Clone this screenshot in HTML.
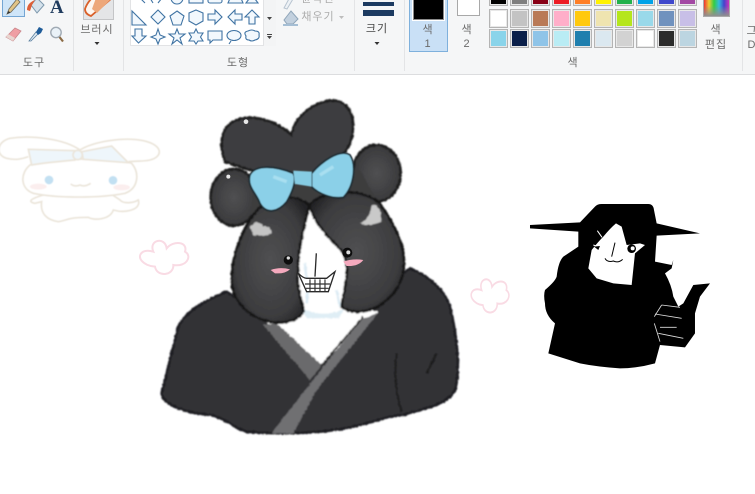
<!DOCTYPE html>
<html lang="ko"><head><meta charset="utf-8"><title>그림판</title>
<style>
html,body{margin:0;padding:0;width:755px;height:494px;overflow:hidden;background:#fff}
body{position:relative;font-family:"Liberation Sans","Noto Sans CJK KR","NanumGothic",sans-serif;font-size:11px;color:#505050}
#ribbon{position:absolute;left:0;top:0;width:755px;height:74px;background:#f5f6f7;border-bottom:1px solid #dcdddf;overflow:hidden}
.t{position:absolute;white-space:nowrap;line-height:14px;text-align:center;transform:translateX(-50%);letter-spacing:1px}
.g{color:#6a6a6a}
.sep{position:absolute;top:0;width:1px;height:71px;background:#e3e4e6}
.c{position:absolute;box-sizing:border-box;width:19px;height:19px;border:1px solid #b4b4b4;outline:1px solid #e8e8e8;outline-offset:-2px}
svg{position:absolute;left:0;top:0}
</style></head><body>
<div id="ribbon">
<div class="sep" style="left:73px"></div><div class="sep" style="left:123px"></div><div class="sep" style="left:354px"></div><div class="sep" style="left:404px"></div><div class="sep" style="left:742px"></div>
<div style="position:absolute;left:2px;top:-2px;width:21px;height:17px;background:#cfe5f8;border:1px solid #74a6d4"></div>
<div style="position:absolute;left:83px;top:-2px;width:29px;height:20px;background:#e4e5e7;border:1px solid #c4c5c7"></div>
<div style="position:absolute;left:130px;top:-2px;width:146px;height:48px;background:#fff;border:1px solid #e2e3e5;box-sizing:border-box"></div>
<div style="position:absolute;left:263px;top:-2px;width:13px;height:48px;background:#f3f4f5;border-left:1px solid #e2e3e5;box-sizing:border-box"></div>
<div style="position:absolute;left:409px;top:-2px;width:39px;height:54px;background:#c9e0f6;border:1px solid #7eb0dc;box-sizing:border-box"></div>
<div style="position:absolute;left:413px;top:-2px;width:31px;height:22px;background:#000;border:1px solid #8a8a8a;outline:1px solid #fff;box-sizing:border-box"></div>
<div style="position:absolute;left:457px;top:-2px;width:23px;height:18px;background:#fff;border:1px solid #a8a8a8;box-sizing:border-box"></div>
<div style="position:absolute;left:703px;top:-2px;width:27px;height:19px;border:1px solid #aaa;box-sizing:border-box;background:linear-gradient(180deg,rgba(130,130,130,0) 40%,#8f8f8f 100%),linear-gradient(90deg,#e33,#ec3,#3c4,#3bd,#44c,#c3b)"></div>
<div style="position:absolute;left:363px;top:2px;width:31px;height:4px;background:#1c3a61"></div>
<div style="position:absolute;left:363px;top:10px;width:31px;height:6px;background:#1c3a61"></div>

<div class="c" style="left:489px;top:-13px;background:#000"></div><div class="c" style="left:510px;top:-13px;background:#7f7f7f"></div><div class="c" style="left:531px;top:-13px;background:#880015"></div><div class="c" style="left:552px;top:-13px;background:#ed1c24"></div><div class="c" style="left:573px;top:-13px;background:#ff7f27"></div><div class="c" style="left:594px;top:-13px;background:#fff200"></div><div class="c" style="left:615px;top:-13px;background:#22b14c"></div><div class="c" style="left:636px;top:-13px;background:#00a2e8"></div><div class="c" style="left:657px;top:-13px;background:#3f48cc"></div><div class="c" style="left:678px;top:-13px;background:#a349a4"></div>
<div class="c" style="left:489px;top:9px;background:#fff"></div><div class="c" style="left:510px;top:9px;background:#c3c3c3"></div><div class="c" style="left:531px;top:9px;background:#b97a57"></div><div class="c" style="left:552px;top:9px;background:#ffaec9"></div><div class="c" style="left:573px;top:9px;background:#ffc90e"></div><div class="c" style="left:594px;top:9px;background:#efe4b0"></div><div class="c" style="left:615px;top:9px;background:#b5e61d"></div><div class="c" style="left:636px;top:9px;background:#99d9ea"></div><div class="c" style="left:657px;top:9px;background:#7092be"></div><div class="c" style="left:678px;top:9px;background:#c8bfe7"></div>
<div class="c" style="left:489px;top:29px;background:#8ad4ea"></div><div class="c" style="left:510px;top:29px;background:#0a1f4a"></div><div class="c" style="left:531px;top:29px;background:#8fc4e8"></div><div class="c" style="left:552px;top:29px;background:#b9ecf4"></div><div class="c" style="left:573px;top:29px;background:#1f7fae"></div><div class="c" style="left:594px;top:29px;background:#dbe8f0"></div><div class="c" style="left:615px;top:29px;background:#d2d2d2"></div><div class="c" style="left:636px;top:29px;background:#fff"></div><div class="c" style="left:657px;top:29px;background:#2c2c2c"></div><div class="c" style="left:678px;top:29px;background:#bcd5e1"></div>

<svg width="755" height="74" viewBox="0 0 755 74">
<!-- pencil -->
<path d="M7 14L9 9 17-1 20 2 11 12Z" fill="#e0c488" stroke="#6f6a5a" stroke-width=".8"/><path d="M7 14L8.500 11 10.500 12.500Z" fill="#333"/>
<!-- fill bucket -->
<path d="M31 5L37-2 44 5 37 13Z" fill="#d5e2ec" stroke="#7d98ad"/><path d="M27 10C27 5 30 2 35 0L32 5 30 11Z" fill="#dd5f38"/>
<text x="50" y="13" font-family="Liberation Serif" font-weight="700" font-size="19" fill="#1f3b5e">A</text>
<!-- eraser -->
<path d="M6 37L15 28 21 31 13 41Z" fill="#ef9ea3" stroke="#c9868a" stroke-width=".8"/><path d="M6 37L13 41 15 38 8 34Z" fill="#e8d5d0"/>
<!-- eyedropper -->
<path d="M29 41L36 32 38 34 31 41Z" fill="#dfeaf3" stroke="#5a7f9f" stroke-width=".8"/><path d="M36 32L39 27 43 29 41 33 38 35Z" fill="#1f5c99"/>
<!-- magnifier -->
<circle cx="56" cy="32.500" r="5.200" fill="#eaf2f8" stroke="#a0aab4" stroke-width="1.400"/><path d="M59.500 37L63 41.500" stroke="#8b6b45" stroke-width="2.200"/>
<!-- brush -->
<path d="M85 9Q85 14 91 16L112-2 92-2Q87 3 85 9Z" fill="#fdf6f0" stroke="#d9602a" stroke-width="1.800"/><path d="M96-2L112-2 97 13 92 9Z" fill="#eda77a"/>
<!-- drop arrows -->
<path d="M94.500 42h5l-2.500 3Z M374.500 42h5l-2.500 3Z" fill="#333"/>
<path d="M267 17h5l-2.500 3ZM267 34h5v1h-5ZM267 36h5l-2.500 3Z" fill="#444"/>
<path d="M339 16h5l-2.500 3Z" fill="#bdbdbd"/>
<!-- shapes -->
<g fill="#f2f8fd" stroke="#3f73a3" stroke-width="1.100">
<path d="M140-2L145 3M150-2L153 3M158 3L162-2"/>
<circle cx="177" cy="-2" r="6"/><rect x="189" y="-6" width="14" height="9"/><rect x="208" y="-6" width="14" height="9" rx="2"/>
<path d="M228 3L231-4H240L243 3Z"/><path d="M246 3L252-5 258 3Z"/>
<path d="M132 11L146 25H132Z"/><path d="M158 10L165 17 158 24 151 17Z"/><path d="M177 11L184 16 181 25H173L170 16Z"/><path d="M196 10L203 13V21L196 25 189 21V13Z"/>
<path d="M208 14H215V10L222 17 215 24V20H208Z"/><path d="M242 14H235V10L228 17 235 24V20H242Z"/><path d="M252 10L259 17H255V24H249V17H245Z"/>
<path d="M135 29H142V36H146L138.500 43 132 36H135Z"/><path d="M158 29L160 35 165 37 160 39 158 44 156 39 151 37 156 35Z"/><path d="M177 29L179 34H185L180 38 182 44 177 40 172 44 174 38 169 34H175Z"/>
<path d="M196 29L198 33H203L200.500 37 203 41H198L196 44 194 41H189L191.500 37 189 33H194Z"/>
<path d="M208 31H222V40H213L210 43V40H208Z"/><ellipse cx="234" cy="35.500" rx="7" ry="5"/><path d="M231 41L229 44"/><path d="M248 31Q252 29 255 31 260 31 259 35 260 39 255 40 252 42 249 40 245 40 246 36 243 32 248 31Z"/>
</g>
<!-- outline & fill -->
<path d="M284 8L290-3 293-1 287 9Z" fill="#eef2f6" stroke="#b8c4d0"/>
<path d="M284 20L291 11 298 19 293 24 287 24Z" fill="#c2d0de" stroke="#8fa5b9"/><path d="M283 25H298" stroke="#a5bed4" stroke-width="2"/>
</svg>

<div class="t g" style="left:97px;top:23px">브러시</div>
<div class="t g" style="left:34px;top:56px">도구</div>
<div class="t g" style="left:238px;top:56px">도형</div>
<div class="t" style="left:377px;top:22px;color:#444">크기</div>
<div class="t g" style="left:428px;top:23px">색</div><div class="t g" style="left:428px;top:37px">1</div>
<div class="t g" style="left:467px;top:23px">색</div><div class="t g" style="left:467px;top:37px">2</div>
<div class="t g" style="left:573px;top:56px">색</div>
<div class="t g" style="left:716px;top:23px">색</div><div class="t g" style="left:716px;top:38px">편집</div>
<div class="t g" style="left:752px;top:24px">그</div><div class="t g" style="left:752px;top:38px">D</div>
<div class="t" style="left:318px;top:10px;color:#adadad">채우기</div>
<div class="t" style="left:318px;top:-8px;color:#adadad">윤곽선</div>
</div>

<svg width="755" height="494" viewBox="0 0 755 494" style="top:0">
<defs>
<filter id="b" x="-5%" y="-5%" width="110%" height="110%"><feGaussianBlur stdDeviation="1.800"/></filter>
<filter id="s" x="-5%" y="-5%" width="110%" height="110%"><feGaussianBlur stdDeviation=".5"/></filter>
<filter id="r" x="-5%" y="-5%" width="110%" height="110%"><feTurbulence type="fractalNoise" baseFrequency=".12" numOctaves="2" seed="4"/><feDisplacementMap in="SourceGraphic" scale="7" xChannelSelector="R" yChannelSelector="G"/><feGaussianBlur stdDeviation="2.300"/></filter>
<radialGradient id="h1" cx=".5" cy=".5" r=".6"><stop offset="0" stop-color="#505052"/><stop offset=".75" stop-color="#3c3c3e"/><stop offset="1" stop-color="#242426"/></radialGradient>
<path id="fl" d="M460 365C445 330 495 318 500 355 520 330 565 335 555 365 578 378 560 412 520 405 522 438 470 442 465 410 430 408 405 380 430 365 440 360 450 362 460 365Z" fill="#fff" stroke="#f9dbe4" stroke-width="6"/></defs>

<!-- Cinnamoroll -->
<g transform="translate(0,130) scale(.3333)" fill="#fff" stroke="#ebe5da" stroke-width="5" filter="url(#b)">
<path d="M240 60C190 25 90 15 30 25-10 35-15 75 20 85 50 92 70 85 85 80"/>
<path d="M240 60C280 35 370 20 430 32 490 45 490 80 450 90 430 95 410 92 385 95"/>
<path d="M130 195C95 205 80 215 105 220L125 215C120 250 140 270 175 275 200 272 200 262 265 262 280 272 330 270 340 240 375 250 425 240 415 210 400 220 370 222 360 210L330 190Z"/>
<path d="M90 105C60 130 60 175 100 190 170 205 300 205 375 190 415 175 420 130 395 100 360 85 130 80 90 105Z"/>
<path d="M85 58L225 62 225 90C170 95 120 100 95 105Z" fill="#eef6fb"/><path d="M245 65L335 48 385 98 250 88Z" fill="#eef6fb"/><circle cx="233" cy="75" r="14" fill="#eef6fb"/>
<circle cx="147" cy="150" r="13" fill="#c2e0f2" stroke="none"/><circle cx="339" cy="151" r="13" fill="#c2e0f2" stroke="none"/>
<ellipse cx="115" cy="170" rx="25" ry="9" fill="#fbeeee" stroke="none"/><ellipse cx="365" cy="172" rx="25" ry="9" fill="#fbeeee" stroke="none"/>
<path d="M212 162Q225 172 240 165 255 172 272 160" fill="none"/>
</g>

<use href="#fl" transform="translate(0,130) scale(.3333)" filter="url(#s)"/>
<use href="#fl" transform="translate(362,168.500) scale(.26,.3333)" filter="url(#s)"/>

<!-- main figure -->
<g transform="translate(130,90) scale(.3333)">
<g filter="url(#r)">
<!-- body -->
<path d="M290 605C230 630 170 660 145 710 130 770 110 850 95 910 100 950 180 970 240 975 290 985 320 1020 350 1025 450 1035 600 1030 690 1005 750 990 790 975 820 975 860 960 950 950 975 900 990 850 985 750 960 650 940 590 880 550 840 535L700 640 400 680Z" fill="#323234" stroke="#1f1f20" stroke-width="8"/>
<path d="M800 790C790 850 800 920 815 965M920 790L890 850" stroke="#1e1e1f" stroke-width="7" fill="none"/>
<!-- neck -->
<path d="M400 690L570 825 745 665 620 640 500 660Z" fill="#fff"/>
<!-- collar -->
<path d="M400 705L440 700 575 825 540 870Z" fill="#6a6a6c"/>
<path d="M425 1030L690 690 745 668 560 900 490 1030Z" fill="#707072"/>
<path d="M575 825L700 680" stroke="#2c2c2c" stroke-width="5" fill="none"/>
<!-- buns -->
<ellipse cx="312" cy="322" rx="70" ry="85" fill="url(#h1)" stroke="#1a1a1a" stroke-width="8"/>
<ellipse cx="740" cy="250" rx="72" ry="85" fill="url(#h1)" stroke="#1a1a1a" stroke-width="8"/>
<!-- top hair -->
<path d="M285 215C265 160 275 115 310 95 350 70 430 85 485 135 490 90 540 40 600 32 650 28 675 70 668 125 665 160 650 185 630 200L540 260 420 260Z" fill="#3e3e40" stroke="#1a1a1a" stroke-width="8"/>
<path d="M380 240H690L745 340 538 345 360 390Z" fill="#3c3c3e"/>
<!-- face -->
<path d="M535 340L480 560 520 665Q575 680 635 660L680 500Z" fill="#fff"/>
<path d="M510 650Q575 690 645 655L625 685 530 685Z" fill="#dfeef5"/>
<path d="M525 520Q535 600 530 640M620 600L630 650" stroke="#dcebf4" stroke-width="8" fill="none"/>
<!-- head lobes -->
<path d="M538 345C520 420 500 500 505 540 495 590 520 640 520 665 500 700 440 705 400 690 340 670 305 620 305 570 305 500 330 440 360 390 400 320 480 300 538 345Z" fill="url(#h1)" stroke="#171717" stroke-width="8"/>
<path d="M538 345C560 420 620 460 640 490 665 540 640 600 635 650 660 675 730 670 770 630 820 590 835 520 810 450 790 400 770 370 745 335 680 290 580 300 538 345Z" fill="url(#h1)" stroke="#171717" stroke-width="8"/>
<!-- highlights -->
<path d="M360 410Q380 385 400 410 425 405 425 430 395 440 370 435Z" fill="#c4c4c4"/>
<path d="M690 400Q720 390 725 345 755 345 755 395 720 410 690 400Z" fill="#c9c9c9"/>
</g>
<!-- bow -->
<g filter="url(#b)">
<path d="M360 255C375 225 430 225 490 250 500 270 490 300 470 335 445 365 410 375 390 340 380 310 350 290 360 255Z" fill="#8bd0e8" stroke="#1d2a30" stroke-width="5"/>
<path d="M545 250C575 215 630 175 660 195 680 225 672 290 640 322 605 328 565 310 545 290Z" fill="#8bd0e8" stroke="#1d2a30" stroke-width="5"/>
<path d="M490 242L545 245 545 290 495 282Z" fill="#86cce3"/>
<path d="M430 260L470 275M570 255L610 230" stroke="#a9dff0" stroke-width="10" fill="none"/>
</g>
<!-- eyes, cheeks, mouth -->
<g filter="url(#s)">
<path d="M422 540Q450 530 480 538 465 552 435 550Z" fill="#f4a9bd"/>
<path d="M640 515Q670 505 700 510 685 530 650 528Z" fill="#f4a9bd"/>
<circle cx="475" cy="510" r="14" fill="#111"/><circle cx="475" cy="504" r="5" fill="#ddd"/>
<circle cx="652" cy="488" r="15" fill="#111"/><circle cx="655" cy="487" r="6" fill="#ddd"/>
<path d="M559 490L555 560M505 550Q520 565 530 565L590 565 615 545 595 605 530 605Z" fill="#fff" stroke="#2a2a2a" stroke-width="4"/>
<path d="M540 568V604M555 568V604M570 568V604M585 568V604M525 582H600M528 595H596" stroke="#333" stroke-width="3.500"/>
<circle cx="348" cy="95" r="7" fill="#e8e8e8"/><circle cx="295" cy="260" r="6" fill="#e8e8e8"/>
</g>
</g>

<!-- right black figure -->
<g transform="translate(520,190) scale(.3333)">
<path d="M30 105L180 97 225 50Q232 42 245 42L385 42Q400 42 402 60L410 100 540 130 410 137 405 215 455 225 460 210 455 235 435 250Q455 285 460 320L475 350 490 340 520 285 570 280 540 320 525 370 525 430 495 472 420 465 405 520Q350 535 300 535 230 530 180 520L85 490 105 400Q75 375 75 340 70 315 75 300 105 275 110 260 115 215 130 200L175 170 175 125 30 115Z" fill="#000"/>
<path d="M205 235L215 180Q235 155 250 140 270 115 288 100L305 110 320 165 360 160 375 165 345 190 335 285 280 280 230 265Z" fill="#fff"/>
<g fill="none" stroke="#000" stroke-width="3"><path d="M285 158L275 200"/><path d="M255 205Q262 218 280 213 295 220 308 208"/></g>
<circle cx="335" cy="176" r="13" fill="#000"/><circle cx="338" cy="175" r="6" fill="#fff"/>
<path d="M220 165L240 172M232 122L246 142" stroke="#fff" stroke-width="3"/><path d="M222 170L240 168 235 180Z" fill="#000"/>
<path d="M425 345L480 352M405 372L485 385M403 400L420 455M420 412L470 412M415 430L490 445M425 345L403 380" fill="none" stroke="#ddd" stroke-width="2.500"/>
</g>
</svg>
</body></html>
